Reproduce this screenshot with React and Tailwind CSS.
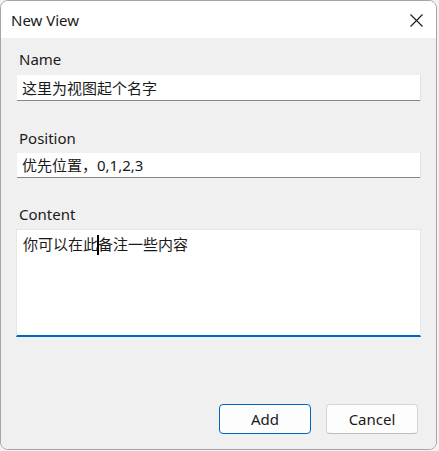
export default function App() {
  const font = { fontFamily: '"Noto Sans", "Noto Sans CJK SC", sans-serif' }
  return (
    <div className="w-[439px] h-[451px] bg-[#f3f1f2]" style={font}>
      <div className="w-[437px] h-[450px] border border-[#a6a6a6] rounded-lg overflow-hidden flex flex-col text-[15px] text-[#1a1a1a]">
        {/* Title bar */}
        <div className="h-[37px] bg-white flex items-center justify-between pl-[10px] pr-[13px] shrink-0">
          <span className="leading-5 mt-[1px]">New View</span>
          <svg width="13" height="13" viewBox="0 0 13 13" className="mt-[1px]">
            <path d="M0.5 0.5 L12.5 12.5 M12.5 0.5 L0.5 12.5" stroke="#1a1a1a" strokeWidth="1.1" />
          </svg>
        </div>

        {/* Body */}
        <div className="flex-1 bg-[#f0f0f0] flex flex-col pt-[11px] pl-[15px]">
          <label className="leading-5 h-5 ml-[3px]">Name</label>
          <div className="mt-[6px] ml-[1px] w-[403px] h-[26px] bg-white border-b border-[#868686] shadow-[1px_0_0_#e0e0e0] flex items-center pl-[5px] leading-5">
            这里为视图起个名字
          </div>

          <label className="leading-5 h-5 ml-[3px] mt-[27px]">Position</label>
          <div className="mt-[5px] ml-[1px] w-[403px] h-[25px] bg-white border-b border-[#868686] shadow-[1px_0_0_#e0e0e0] flex items-center pl-[5px] leading-5">
            优先位置，0,1,2,3
          </div>

          <label className="leading-5 h-5 ml-[3px] mt-[26px]">Content</label>
          <div className="mt-[5px] w-[405px] h-[108px] bg-white border border-[#e6e6e6] border-b-2 border-b-[#0067c0] pl-[6px] pt-[4px] leading-5">
            你可以在此<span className="inline-block align-middle w-[2px] h-[20px] bg-black -ml-[1px] -mr-[1px] -mt-[2px]"></span>备注一些内容
          </div>

          <div className="mt-[67px] flex justify-end gap-[15px] pr-[18px]">
            <button className="w-[92px] h-[30px] rounded-[4px] bg-[#fdfdfd] border border-[#0067c0] leading-5">
              Add
            </button>
            <button className="w-[92px] h-[30px] rounded-[4px] bg-[#fdfdfd] border border-[#d4d4d4] border-b-[#bcbcbc] leading-5">
              Cancel
            </button>
          </div>
        </div>
      </div>
    </div>
  )
}
